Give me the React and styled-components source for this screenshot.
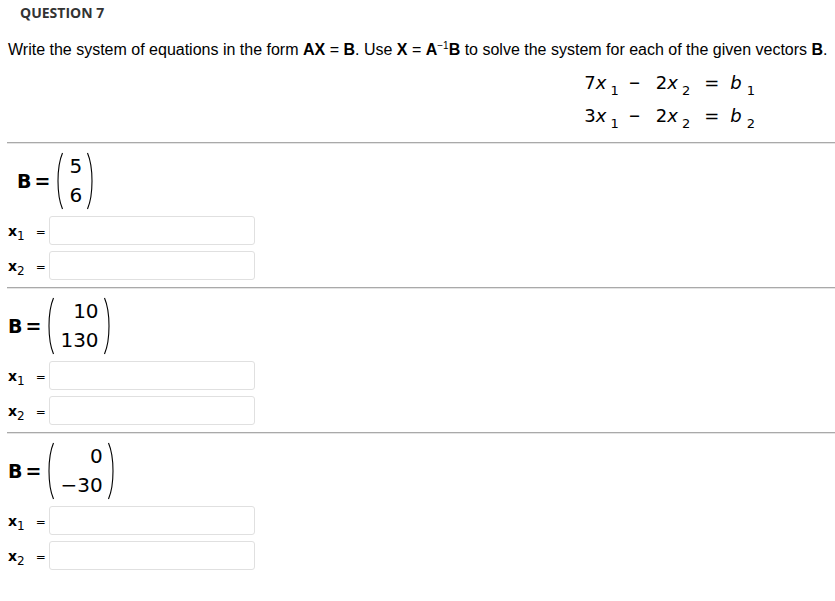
import styled, { createGlobalStyle } from "styled-components";

const Global = createGlobalStyle`
  body {
    margin: 0;
    background: #fff;
    font-family: "Liberation Sans", Arial, sans-serif;
    color: #000;
  }
`;

const Page = styled.div`
  width: 835px;
  padding-top: 3px;
`;

const Title = styled.div`
  font-family: "Open Sans", sans-serif;
  font-weight: 700;
  font-size: 14px;
  line-height: 19px;
  color: #333;
  padding-left: 20px;
`;

const Prompt = styled.p`
  margin: 19px 0 0 8px;
  font-size: 16px;
  line-height: 18px;
  color: #000;
  white-space: nowrap;
  b { font-weight: 700; }
  sup { font-size: 10px; vertical-align: 6px; line-height: 0; }
`;

const System = styled.div`
  display: grid;
  grid-template-columns: repeat(5, auto);
  justify-content: end;
  padding-right: 80px;
  margin: 7px 0 10px;
  font-family: "DejaVu Sans", Verdana, sans-serif;
  font-size: 18px;
  line-height: 33px;
  color: #000;
`;

const Term = styled.span`
  margin-left: ${(p) => p.gap || 0}px;
  i { font-style: italic; }
  sub {
    font-size: 13px;
    vertical-align: -6px;
    line-height: 0;
    margin-left: ${(p) => p.subGap || 3}px;
  }
`;

const Minus = styled.span`
  display: inline-block;
  margin-left: 8px;
  transform: scaleX(0.8);
`;

const Rule = styled.hr`
  margin: 0 0 0 7px;
  border: 0;
  border-top: 1px solid #a9a9a9;
  border-bottom: 1px solid #e4e4e4;
  height: 0;
`;

const Block = styled.section`
  padding: 8px 0 7px;
`;

const VectorRow = styled.div`
  display: flex;
  align-items: center;
  padding-left: ${(p) => p.indent}px;
  height: 58px;
`;

const BLabel = styled.span`
  font-family: "DejaVu Sans", Verdana, sans-serif;
  font-weight: 700;
  font-size: 19px;
  margin-right: 5px;
  span { margin-left: 3px; }
`;

const Column = styled.div`
  display: flex;
  flex-direction: column;
  align-items: flex-end;
  padding: 0 4px 0 5px;
  font-family: "DejaVu Sans", Verdana, sans-serif;
  font-size: 20px;
  line-height: 29px;
`;

const Answers = styled.div`
  display: grid;
  grid-template-columns: 41px 206px;
  row-gap: 6px;
  margin-top: 6px;
  padding-left: 8px;
  align-items: center;
`;

const VarLabel = styled.span`
  font-family: "DejaVu Sans", Verdana, sans-serif;
  font-weight: 700;
  font-size: 14px;
  color: #000;
  sub { font-size: 12px; font-weight: 400; vertical-align: -4px; line-height: 0; }
  em { font-style: normal; font-weight: 400; font-size: 12px; margin-left: 11px; }
`;

const Field = styled.input`
  box-sizing: border-box;
  width: 206px;
  height: 29px;
  border: 1px solid #e0e0e0;
  border-radius: 3px;
  background: #fff;
  outline: none;
`;

const Paren = ({ right }) => (
  <svg width="9" height="58" viewBox="0 0 9 58">
    <path
      d={right ? "M1.5 1 C7.5 15 7.5 43 1.5 57" : "M7.5 1 C1.5 15 1.5 43 7.5 57"}
      fill="none"
      stroke="#000"
      strokeWidth="1.1"
    />
  </svg>
);

const vectors = [
  { b: ["5", "6"], indent: 17 },
  { b: ["10", "130"], indent: 8 },
  { b: ["0", "\u221230"], indent: 8 },
];

const Eq = ({ c1, c2, n }) => (
  <>
    <Term subGap={4}>{c1}<i>x</i><sub>1</sub></Term>
    <Minus>{"\u2212"}</Minus>
    <Term gap={14} subGap={4}>{c2}<i>x</i><sub>2</sub></Term>
    <Term gap={14}>=</Term>
    <Term gap={11} subGap={5}><i>b</i><sub>{n}</sub></Term>
  </>
);

export default function App() {
  return (
    <Page>
      <Global />
      <Title>QUESTION 7</Title>
      <Prompt>
        Write the system of equations in the form <b>AX</b> = <b>B</b>. Use <b>X</b> = <b>A</b>
        <sup>−1</sup><b>B</b> to solve the system for each of the given vectors <b>B</b>.
      </Prompt>
      <System>
        <Eq c1="7" c2="2" n="1" />
        <Eq c1="3" c2="2" n="2" />
      </System>
      {vectors.map((v, i) => (
        <div key={i}>
          <Rule />
          <Block>
            <VectorRow indent={v.indent}>
              <BLabel>B<span>=</span></BLabel>
              <Paren />
              <Column>
                {v.b.map((x) => (
                  <span key={x}>{x}</span>
                ))}
              </Column>
              <Paren right />
            </VectorRow>
            <Answers>
              <VarLabel>x<sub>1</sub><em>=</em></VarLabel>
              <Field />
              <VarLabel>x<sub>2</sub><em>=</em></VarLabel>
              <Field />
            </Answers>
          </Block>
        </div>
      ))}
    </Page>
  );
}
